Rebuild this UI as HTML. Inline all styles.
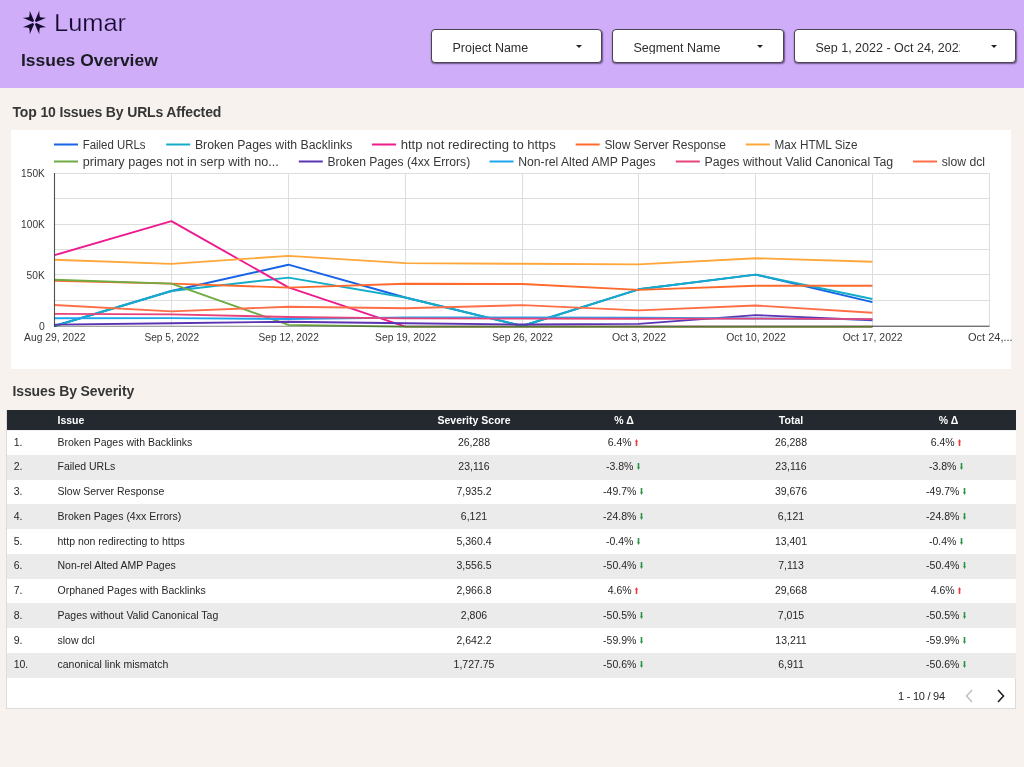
<!DOCTYPE html>
<html><head><meta charset="utf-8"><style>
*{box-sizing:border-box}
html,body{margin:0;padding:0}
body{width:1024px;height:767px;overflow:hidden;position:relative;background:#f7f2ee;font-family:"Liberation Sans", sans-serif;-webkit-font-smoothing:antialiased}
#wrap{position:absolute;left:0;top:0;width:1024px;height:767px;will-change:transform}
.hdr{position:absolute;left:0;top:0;width:1024px;height:88px;background:#cfadf9}
.abs{position:absolute;white-space:nowrap;line-height:1}
.dd{position:absolute;top:29px;height:34px;background:#fff;border:1px solid #4a4650;border-radius:4px;box-shadow:0.3px 1px 1.5px rgba(30,10,50,.55)}
.dd span{position:absolute;top:11.5px;font-size:12.5px;color:#2e2e2e;line-height:1;white-space:nowrap;overflow:hidden}
.dd i{position:absolute;top:15px;width:0;height:0;border-left:3px solid transparent;border-right:3px solid transparent;border-top:3px solid #222}
.tbl{position:absolute;left:6px;top:409.5px;width:1010px;height:299px;background:#fff;border:1px solid #dcdcdc}
.th{position:absolute;left:7px;top:410px;width:1008.5px;height:20px;background:#23292f}
.th span{position:absolute;top:4.7px;font-size:10.5px;font-weight:bold;color:#fff;line-height:1;white-space:nowrap}
.tr{position:absolute;left:7px;width:1008.5px;height:24.75px}
.tr span{position:absolute;top:6.7px;font-size:10.5px;color:#262626;line-height:1;white-space:nowrap}
.tr .c0{left:6.7px}
.tr .c1{left:50.5px}
.tr .cc{text-align:center}
</style></head><body><div id="wrap">
<div class="hdr"></div>
<svg style="position:absolute;left:21.9px;top:10px" width="25" height="25" viewBox="-12.5 -12.5 25 25">
<g fill="#140a30">
<path id="q" d="M-4.8,-11.7 Q-2.3,-6.0 -0.45,-1.7 L-1.1,-1.1 L-1.7,-0.45 Q-6.0,-2.3 -11.7,-4.8 Q-7.6,-4.6 -5.4,-5.4 Q-4.6,-7.6 -4.8,-11.7 Z"/>
<use href="#q" transform="rotate(90)"/>
<use href="#q" transform="rotate(180)"/>
<use href="#q" transform="rotate(270)"/>
</g></svg>
<div class="abs" style="left:54.3px;top:12px;font-size:23px;color:#140a30;-webkit-text-stroke:0.25px #cfadf9;transform:scaleX(1.105);transform-origin:0 0">Lumar</div>
<div class="abs" style="left:20.7px;top:52.7px;font-size:16px;font-weight:bold;color:#1b1b24;transform:scaleX(1.09);transform-origin:0 0">Issues Overview</div>
<div class="dd" style="left:431px;width:171px"><span style="left:20.5px">Project Name</span><i style="left:144px"></i></div>
<div class="dd" style="left:612px;width:171.5px"><span style="left:20.5px">Segment Name</span><i style="left:144px"></i></div>
<div class="dd" style="left:794px;width:222px"><span style="left:20.5px;width:144px">Sep 1, 2022 - Oct 24, 2022</span><i style="left:196px"></i></div>
<div class="abs" style="left:12.5px;top:104.8px;font-size:14px;font-weight:bold;color:#363636;letter-spacing:-0.15px">Top 10 Issues By URLs Affected</div>
<svg style="position:absolute;left:0;top:0" width="1024" height="767" font-family='"Liberation Sans", sans-serif'>
<rect x="11" y="130" width="1000" height="239" fill="#ffffff"/>
<line x1="54" y1="173.50" x2="990" y2="173.50" stroke="#dedede" stroke-width="1"/>
<line x1="54" y1="198.50" x2="990" y2="198.50" stroke="#dedede" stroke-width="1"/>
<line x1="54" y1="224.50" x2="990" y2="224.50" stroke="#dedede" stroke-width="1"/>
<line x1="54" y1="249.50" x2="990" y2="249.50" stroke="#dedede" stroke-width="1"/>
<line x1="54" y1="274.50" x2="990" y2="274.50" stroke="#dedede" stroke-width="1"/>
<line x1="54" y1="300.50" x2="990" y2="300.50" stroke="#dedede" stroke-width="1"/>
<line x1="171.5" y1="173" x2="171.5" y2="326" stroke="#dedede" stroke-width="1"/>
<line x1="288.5" y1="173" x2="288.5" y2="326" stroke="#dedede" stroke-width="1"/>
<line x1="405.5" y1="173" x2="405.5" y2="326" stroke="#dedede" stroke-width="1"/>
<line x1="522.5" y1="173" x2="522.5" y2="326" stroke="#dedede" stroke-width="1"/>
<line x1="638.5" y1="173" x2="638.5" y2="326" stroke="#dedede" stroke-width="1"/>
<line x1="755.5" y1="173" x2="755.5" y2="326" stroke="#dedede" stroke-width="1"/>
<line x1="872.5" y1="173" x2="872.5" y2="326" stroke="#dedede" stroke-width="1"/>
<line x1="989.5" y1="173" x2="989.5" y2="326" stroke="#dedede" stroke-width="1"/>
<polyline points="54.5,326 171.4,291 288.4,264.7 405.3,297.5 522.3,326 638.7,289.3 755.7,274.6 872.4,302.2" fill="none" stroke="#1763e6" stroke-width="1.9" stroke-linejoin="round"/>
<polyline points="54.5,326 171.4,291 288.4,277.6 405.3,297.5 522.3,326 638.7,289.3 755.7,274.6 872.4,299" fill="none" stroke="#13adc8" stroke-width="1.9" stroke-linejoin="round"/>
<polyline points="54.5,255.2 171.4,221.2 288.4,287.3 405.3,326.7 522.3,326.7 638.7,326.7 755.7,326.7 872.4,326.7" fill="none" stroke="#ee1b8f" stroke-width="1.9" stroke-linejoin="round"/>
<polyline points="54.5,280.8 171.4,283.6 288.4,287.6 405.3,283.8 522.3,284 638.7,289.9 755.7,285.7 872.4,285.7" fill="none" stroke="#ff6a2c" stroke-width="1.9" stroke-linejoin="round"/>
<polyline points="54.5,259.7 171.4,263.9 288.4,255.9 405.3,263.1 522.3,263.8 638.7,264.4 755.7,258.2 872.4,261.7" fill="none" stroke="#ffa73b" stroke-width="1.9" stroke-linejoin="round"/>
<polyline points="54.5,279.7 171.4,283.6 288.4,324.9 405.3,326.7 522.3,326.7 638.7,326.7 755.7,326.7 872.4,326.7" fill="none" stroke="#6fab43" stroke-width="1.9" stroke-linejoin="round"/>
<polyline points="54.5,324.6 171.4,323.2 288.4,321.7 405.3,323.3 522.3,324.5 638.7,323.9 755.7,315.1 872.4,320.3" fill="none" stroke="#5b34b3" stroke-width="1.9" stroke-linejoin="round"/>
<polyline points="54.5,318.3 171.4,318.1 288.4,319 405.3,317.5 522.3,317.4 638.7,317.7 755.7,318.5 872.4,319.4" fill="none" stroke="#1fa5f0" stroke-width="1.9" stroke-linejoin="round"/>
<polyline points="54.5,313.9 171.4,314.4 288.4,317 405.3,318.4 522.3,318.6 638.7,318.8 755.7,318.6 872.4,319.1" fill="none" stroke="#e9427a" stroke-width="1.9" stroke-linejoin="round"/>
<polyline points="54.5,305 171.4,311.4 288.4,306.8 405.3,308.3 522.3,305.1 638.7,310.4 755.7,305.5 872.4,312.7" fill="none" stroke="#ff6f47" stroke-width="1.9" stroke-linejoin="round"/>
<line x1="54.5" y1="173" x2="54.5" y2="327" stroke="#333" stroke-width="1.1" stroke-opacity="0.85"/>
<line x1="54" y1="326.2" x2="989.5" y2="326.2" stroke="#333" stroke-width="1.1" stroke-opacity="0.6"/>
<line x1="872" y1="326.2" x2="989.5" y2="326.2" stroke="#333" stroke-width="1.1" stroke-opacity="0.6"/>
<text x="39.0" y="330.3" font-size="11.4" fill="#383838" textLength="5.8" lengthAdjust="spacingAndGlyphs">0</text>
<text x="26.599999999999998" y="279.3" font-size="11.4" fill="#383838" textLength="18.2" lengthAdjust="spacingAndGlyphs">50K</text>
<text x="21.099999999999998" y="228.3" font-size="11.4" fill="#383838" textLength="23.7" lengthAdjust="spacingAndGlyphs">100K</text>
<text x="21.099999999999998" y="177.3" font-size="11.4" fill="#383838" textLength="23.7" lengthAdjust="spacingAndGlyphs">150K</text>
<text x="24.1" y="341.2" font-size="11.4" fill="#383838" textLength="61.5" lengthAdjust="spacingAndGlyphs">Aug 29, 2022</text>
<text x="144.4" y="341.2" font-size="11.4" fill="#383838" textLength="54.7" lengthAdjust="spacingAndGlyphs">Sep 5, 2022</text>
<text x="258.6" y="341.2" font-size="11.4" fill="#383838" textLength="60.2" lengthAdjust="spacingAndGlyphs">Sep 12, 2022</text>
<text x="375.1" y="341.2" font-size="11.4" fill="#383838" textLength="61" lengthAdjust="spacingAndGlyphs">Sep 19, 2022</text>
<text x="492.3" y="341.2" font-size="11.4" fill="#383838" textLength="60.6" lengthAdjust="spacingAndGlyphs">Sep 26, 2022</text>
<text x="612.0" y="341.2" font-size="11.4" fill="#383838" textLength="54" lengthAdjust="spacingAndGlyphs">Oct 3, 2022</text>
<text x="726.3" y="341.2" font-size="11.4" fill="#383838" textLength="59.4" lengthAdjust="spacingAndGlyphs">Oct 10, 2022</text>
<text x="842.7" y="341.2" font-size="11.4" fill="#383838" textLength="60" lengthAdjust="spacingAndGlyphs">Oct 17, 2022</text>
<text x="968" y="341" font-size="11" fill="#383838">Oct 24,...</text>
<line x1="54" y1="144.5" x2="78" y2="144.5" stroke="#1763e6" stroke-width="2"/>
<text x="82.7" y="148.9" font-size="12.3" fill="#383838" textLength="62.8" lengthAdjust="spacingAndGlyphs">Failed URLs</text>
<line x1="166.2" y1="144.5" x2="190.2" y2="144.5" stroke="#13adc8" stroke-width="2"/>
<text x="194.89999999999998" y="148.9" font-size="12.3" fill="#383838" textLength="157.5" lengthAdjust="spacingAndGlyphs">Broken Pages with Backlinks</text>
<line x1="372" y1="144.5" x2="396" y2="144.5" stroke="#ee1b8f" stroke-width="2"/>
<text x="400.7" y="148.9" font-size="12.3" fill="#383838" textLength="155" lengthAdjust="spacingAndGlyphs">http not redirecting to https</text>
<line x1="575.7" y1="144.5" x2="599.7" y2="144.5" stroke="#ff6a2c" stroke-width="2"/>
<text x="604.4000000000001" y="148.9" font-size="12.3" fill="#383838" textLength="121.6" lengthAdjust="spacingAndGlyphs">Slow Server Response</text>
<line x1="745.8" y1="144.5" x2="769.8" y2="144.5" stroke="#ffa73b" stroke-width="2"/>
<text x="774.5" y="148.9" font-size="12.3" fill="#383838" textLength="83" lengthAdjust="spacingAndGlyphs">Max HTML Size</text>
<line x1="54" y1="161.5" x2="78" y2="161.5" stroke="#6fab43" stroke-width="2"/>
<text x="82.7" y="165.9" font-size="12.3" fill="#383838" textLength="196" lengthAdjust="spacingAndGlyphs">primary pages not in serp with no...</text>
<line x1="298.8" y1="161.5" x2="322.8" y2="161.5" stroke="#5b34b3" stroke-width="2"/>
<text x="327.5" y="165.9" font-size="12.3" fill="#383838" textLength="142.7" lengthAdjust="spacingAndGlyphs">Broken Pages (4xx Errors)</text>
<line x1="489.5" y1="161.5" x2="513.5" y2="161.5" stroke="#1fa5f0" stroke-width="2"/>
<text x="518.2" y="165.9" font-size="12.3" fill="#383838" textLength="137.5" lengthAdjust="spacingAndGlyphs">Non-rel Alted AMP Pages</text>
<line x1="675.8" y1="161.5" x2="699.8" y2="161.5" stroke="#e9427a" stroke-width="2"/>
<text x="704.5" y="165.9" font-size="12.3" fill="#383838" textLength="188.7" lengthAdjust="spacingAndGlyphs">Pages without Valid Canonical Tag</text>
<line x1="913" y1="161.5" x2="937" y2="161.5" stroke="#ff6f47" stroke-width="2"/>
<text x="941.7" y="165.9" font-size="12.3" fill="#383838" textLength="43.4" lengthAdjust="spacingAndGlyphs">slow dcl</text>
</svg>
<div class="abs" style="left:12.5px;top:383.8px;font-size:14px;font-weight:bold;color:#363636;letter-spacing:-0.12px">Issues By Severity</div>
<div class="tbl"></div>
<div style="position:absolute;left:7px;top:430px;width:1008.5px;height:1px;background:#efefef;z-index:2"></div><div class="th"><span style="left:50.5px">Issue</span><span style="left:393px;width:148px;text-align:center">Severity Score</span><span style="left:541px;width:152px;text-align:center">% &Delta;</span><span style="left:693px;width:182px;text-align:center">Total</span><span style="left:875px;width:133px;text-align:center">% &Delta;</span></div>
<div class="tr" style="top:430.00px;background:#ffffff"><span class="c0">1.</span><span class="c1">Broken Pages with Backlinks</span><span class="cc" style="left:393px;width:148px">26,288</span><span class="cc" style="left:540px;width:152px">6.4%<svg width="3" height="7" viewBox="0 0 3 7" style="margin-left:3.6px"><path d="M1.5 0 L3 2.8 L2.3 2.8 L2.3 7 L0.7 7 L0.7 2.8 L0 2.8Z" fill="#f03a3a"/></svg></span><span class="cc" style="left:693px;width:182px">26,288</span><span class="cc" style="left:872.5px;width:133px">6.4%<svg width="3" height="7" viewBox="0 0 3 7" style="margin-left:3.6px"><path d="M1.5 0 L3 2.8 L2.3 2.8 L2.3 7 L0.7 7 L0.7 2.8 L0 2.8Z" fill="#f03a3a"/></svg></span></div>
<div class="tr" style="top:454.75px;background:#ebebeb"><span class="c0">2.</span><span class="c1">Failed URLs</span><span class="cc" style="left:393px;width:148px">23,116</span><span class="cc" style="left:540px;width:152px">-3.8%<svg width="3" height="7" viewBox="0 0 3 7" style="margin-left:3.6px"><path d="M1.5 7 L3 4.2 L2.3 4.2 L2.3 0 L0.7 0 L0.7 4.2 L0 4.2Z" fill="#2a9446"/></svg></span><span class="cc" style="left:693px;width:182px">23,116</span><span class="cc" style="left:872.5px;width:133px">-3.8%<svg width="3" height="7" viewBox="0 0 3 7" style="margin-left:3.6px"><path d="M1.5 7 L3 4.2 L2.3 4.2 L2.3 0 L0.7 0 L0.7 4.2 L0 4.2Z" fill="#2a9446"/></svg></span></div>
<div class="tr" style="top:479.50px;background:#ffffff"><span class="c0">3.</span><span class="c1">Slow Server Response</span><span class="cc" style="left:393px;width:148px">7,935.2</span><span class="cc" style="left:540px;width:152px">-49.7%<svg width="3" height="7" viewBox="0 0 3 7" style="margin-left:3.6px"><path d="M1.5 7 L3 4.2 L2.3 4.2 L2.3 0 L0.7 0 L0.7 4.2 L0 4.2Z" fill="#2a9446"/></svg></span><span class="cc" style="left:693px;width:182px">39,676</span><span class="cc" style="left:872.5px;width:133px">-49.7%<svg width="3" height="7" viewBox="0 0 3 7" style="margin-left:3.6px"><path d="M1.5 7 L3 4.2 L2.3 4.2 L2.3 0 L0.7 0 L0.7 4.2 L0 4.2Z" fill="#2a9446"/></svg></span></div>
<div class="tr" style="top:504.25px;background:#ebebeb"><span class="c0">4.</span><span class="c1">Broken Pages (4xx Errors)</span><span class="cc" style="left:393px;width:148px">6,121</span><span class="cc" style="left:540px;width:152px">-24.8%<svg width="3" height="7" viewBox="0 0 3 7" style="margin-left:3.6px"><path d="M1.5 7 L3 4.2 L2.3 4.2 L2.3 0 L0.7 0 L0.7 4.2 L0 4.2Z" fill="#2a9446"/></svg></span><span class="cc" style="left:693px;width:182px">6,121</span><span class="cc" style="left:872.5px;width:133px">-24.8%<svg width="3" height="7" viewBox="0 0 3 7" style="margin-left:3.6px"><path d="M1.5 7 L3 4.2 L2.3 4.2 L2.3 0 L0.7 0 L0.7 4.2 L0 4.2Z" fill="#2a9446"/></svg></span></div>
<div class="tr" style="top:529.00px;background:#ffffff"><span class="c0">5.</span><span class="c1">http non redirecting to https</span><span class="cc" style="left:393px;width:148px">5,360.4</span><span class="cc" style="left:540px;width:152px">-0.4%<svg width="3" height="7" viewBox="0 0 3 7" style="margin-left:3.6px"><path d="M1.5 7 L3 4.2 L2.3 4.2 L2.3 0 L0.7 0 L0.7 4.2 L0 4.2Z" fill="#2a9446"/></svg></span><span class="cc" style="left:693px;width:182px">13,401</span><span class="cc" style="left:872.5px;width:133px">-0.4%<svg width="3" height="7" viewBox="0 0 3 7" style="margin-left:3.6px"><path d="M1.5 7 L3 4.2 L2.3 4.2 L2.3 0 L0.7 0 L0.7 4.2 L0 4.2Z" fill="#2a9446"/></svg></span></div>
<div class="tr" style="top:553.75px;background:#ebebeb"><span class="c0">6.</span><span class="c1">Non-rel Alted AMP Pages</span><span class="cc" style="left:393px;width:148px">3,556.5</span><span class="cc" style="left:540px;width:152px">-50.4%<svg width="3" height="7" viewBox="0 0 3 7" style="margin-left:3.6px"><path d="M1.5 7 L3 4.2 L2.3 4.2 L2.3 0 L0.7 0 L0.7 4.2 L0 4.2Z" fill="#2a9446"/></svg></span><span class="cc" style="left:693px;width:182px">7,113</span><span class="cc" style="left:872.5px;width:133px">-50.4%<svg width="3" height="7" viewBox="0 0 3 7" style="margin-left:3.6px"><path d="M1.5 7 L3 4.2 L2.3 4.2 L2.3 0 L0.7 0 L0.7 4.2 L0 4.2Z" fill="#2a9446"/></svg></span></div>
<div class="tr" style="top:578.50px;background:#ffffff"><span class="c0">7.</span><span class="c1">Orphaned Pages with Backlinks</span><span class="cc" style="left:393px;width:148px">2,966.8</span><span class="cc" style="left:540px;width:152px">4.6%<svg width="3" height="7" viewBox="0 0 3 7" style="margin-left:3.6px"><path d="M1.5 0 L3 2.8 L2.3 2.8 L2.3 7 L0.7 7 L0.7 2.8 L0 2.8Z" fill="#f03a3a"/></svg></span><span class="cc" style="left:693px;width:182px">29,668</span><span class="cc" style="left:872.5px;width:133px">4.6%<svg width="3" height="7" viewBox="0 0 3 7" style="margin-left:3.6px"><path d="M1.5 0 L3 2.8 L2.3 2.8 L2.3 7 L0.7 7 L0.7 2.8 L0 2.8Z" fill="#f03a3a"/></svg></span></div>
<div class="tr" style="top:603.25px;background:#ebebeb"><span class="c0">8.</span><span class="c1">Pages without Valid Canonical Tag</span><span class="cc" style="left:393px;width:148px">2,806</span><span class="cc" style="left:540px;width:152px">-50.5%<svg width="3" height="7" viewBox="0 0 3 7" style="margin-left:3.6px"><path d="M1.5 7 L3 4.2 L2.3 4.2 L2.3 0 L0.7 0 L0.7 4.2 L0 4.2Z" fill="#2a9446"/></svg></span><span class="cc" style="left:693px;width:182px">7,015</span><span class="cc" style="left:872.5px;width:133px">-50.5%<svg width="3" height="7" viewBox="0 0 3 7" style="margin-left:3.6px"><path d="M1.5 7 L3 4.2 L2.3 4.2 L2.3 0 L0.7 0 L0.7 4.2 L0 4.2Z" fill="#2a9446"/></svg></span></div>
<div class="tr" style="top:628.00px;background:#ffffff"><span class="c0">9.</span><span class="c1">slow dcl</span><span class="cc" style="left:393px;width:148px">2,642.2</span><span class="cc" style="left:540px;width:152px">-59.9%<svg width="3" height="7" viewBox="0 0 3 7" style="margin-left:3.6px"><path d="M1.5 7 L3 4.2 L2.3 4.2 L2.3 0 L0.7 0 L0.7 4.2 L0 4.2Z" fill="#2a9446"/></svg></span><span class="cc" style="left:693px;width:182px">13,211</span><span class="cc" style="left:872.5px;width:133px">-59.9%<svg width="3" height="7" viewBox="0 0 3 7" style="margin-left:3.6px"><path d="M1.5 7 L3 4.2 L2.3 4.2 L2.3 0 L0.7 0 L0.7 4.2 L0 4.2Z" fill="#2a9446"/></svg></span></div>
<div class="tr" style="top:652.75px;background:#ebebeb"><span class="c0">10.</span><span class="c1">canonical link mismatch</span><span class="cc" style="left:393px;width:148px">1,727.75</span><span class="cc" style="left:540px;width:152px">-50.6%<svg width="3" height="7" viewBox="0 0 3 7" style="margin-left:3.6px"><path d="M1.5 7 L3 4.2 L2.3 4.2 L2.3 0 L0.7 0 L0.7 4.2 L0 4.2Z" fill="#2a9446"/></svg></span><span class="cc" style="left:693px;width:182px">6,911</span><span class="cc" style="left:872.5px;width:133px">-50.6%<svg width="3" height="7" viewBox="0 0 3 7" style="margin-left:3.6px"><path d="M1.5 7 L3 4.2 L2.3 4.2 L2.3 0 L0.7 0 L0.7 4.2 L0 4.2Z" fill="#2a9446"/></svg></span></div>
<div class="abs" style="left:898px;top:690.5px;font-size:11px;color:#262626;letter-spacing:-0.25px">1 - 10 / 94</div>
<svg style="position:absolute;left:964px;top:689px" width="10" height="14"><path d="M8 1 L2.5 7 L8 13" fill="none" stroke="#bdbdbd" stroke-width="1.4"/></svg>
<svg style="position:absolute;left:996px;top:689px" width="10" height="14"><path d="M2 1 L7.5 7 L2 13" fill="none" stroke="#222" stroke-width="1.6"/></svg>
</div></body></html>
